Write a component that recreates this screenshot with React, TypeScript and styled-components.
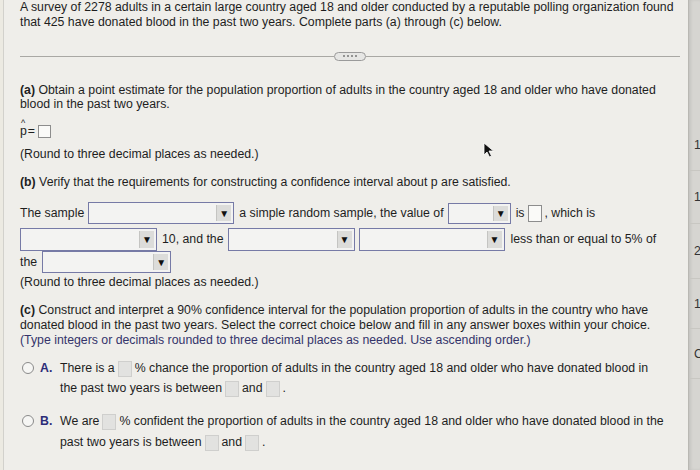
import React from 'react';
import styled, { createGlobalStyle } from 'styled-components';

const GlobalStyle = createGlobalStyle`
  html, body {
    margin: 0;
    padding: 0;
    background: #edece8;
  }
  body {
    font-family: "Liberation Sans", Arial, sans-serif;
    font-size: 12.3px;
    color: #1e1e1e;
  }
`;

const Screen = styled.div`
  display: flex;
  width: 700px;
  height: 470px;
  overflow: hidden;
  background: #efeeea;
`;

const Gutter = styled.div`
  width: 3px;
  border-right: 1px solid #d2d1cc;
  background: #eceae2;
`;

const Main = styled.main`
  position: relative;
  flex: 1;
  padding: 0 0 0 16px;
`;

const Side = styled.aside`
  width: 11px;
  background: #d6d5d1;
  border-left: 1px solid #b9b8b3;
  box-shadow: inset 2px 0 3px rgba(0, 0, 0, 0.08);
  display: flex;
  flex-direction: column;
  padding-top: 120px;
`;

const SideItem = styled.div<{ $h: number }>`
  height: ${(p) => p.$h}px;
  border-bottom: 1px solid #c8c7c2;
  display: flex;
  align-items: center;
  padding-left: 5px;
  color: #333;
  overflow: hidden;
`;

const Para = styled.p<{ $top: number; $lh?: number }>`
  margin: ${(p) => p.$top}px 0 0;
  line-height: ${(p) => p.$lh ?? 15}px;
  white-space: nowrap;
`;

const DividerRow = styled.div`
  margin-top: 21px;
  height: 10px;
  width: 660px;
  display: flex;
  align-items: center;
`;

const Rule = styled.div`
  flex: 1;
  height: 1px;
  background: #a9a8a4;
`;

const Pill = styled.div`
  width: 30px;
  height: 7px;
  border: 1px solid #9a9a9a;
  border-radius: 5px;
  background: #e6e6e4;
  display: flex;
  align-items: center;
  justify-content: center;
  gap: 2px;
  span {
    width: 2px;
    height: 2px;
    background: #777;
    border-radius: 1px;
  }
`;

const Bold = styled.b`
  font-weight: bold;
`;

const Row = styled.div<{ $top: number; $h: number }>`
  display: flex;
  align-items: center;
  margin-top: ${(p) => p.$top}px;
  height: ${(p) => p.$h}px;
  white-space: nowrap;
`;

const Gap = styled.span<{ $w: number }>`
  display: inline-block;
  width: ${(p) => p.$w}px;
`;

const Select = styled.div<{ $w: number; $h?: number }>`
  width: ${(p) => p.$w}px;
  height: ${(p) => p.$h ?? 22}px;
  box-sizing: border-box;
  border: 1px solid #767aa6;
  background: #f3f3f2;
  display: flex;
  justify-content: flex-end;
  align-items: stretch;
`;

const Arrow = styled.div`
  width: 14px;
  margin: 2px 2px 2px 0;
  background: #dcdcda;
  border-left: 1px solid #c4c4c2;
  display: flex;
  align-items: center;
  justify-content: center;
  font-size: 10px;
  color: #111;
`;

const Box = styled.span<{ $w?: number; $h?: number; $fill?: boolean }>`
  display: inline-block;
  vertical-align: middle;
  box-sizing: border-box;
  width: ${(p) => p.$w ?? 14}px;
  height: ${(p) => p.$h ?? 16}px;
  border: 1px solid ${(p) => (p.$fill ? '#cfcfcd' : '#8d8d8d')};
  background: ${(p) => (p.$fill ? '#e2e2e0' : '#fafaf8')};
  margin: 0 3px;
`;

const Hat = styled.span`
  position: relative;
  display: inline-block;
  &::before {
    content: '^';
    position: absolute;
    left: 1px;
    top: -6px;
    font-size: 9px;
  }
`;

const Note = styled.span`
  color: #34346a;
`;

const Choice = styled.div<{ $top: number; $lh: number }>`
  display: flex;
  margin-top: ${(p) => p.$top}px;
  line-height: ${(p) => p.$lh}px;
  white-space: nowrap;
`;

const Radio = styled.span`
  width: 12px;
  height: 12px;
  box-sizing: border-box;
  border: 1.5px solid #8a8a8a;
  border-radius: 50%;
  background: #f6f6f4;
  margin: 4px 6px 0 2px;
  flex-shrink: 0;
`;

const Letter = styled.span`
  width: 20px;
  font-weight: bold;
  color: #2c2c78;
  flex-shrink: 0;
`;

const Cursor = styled.svg`
  position: absolute;
  left: 479px;
  top: 142px;
`;

const App: React.FC = (): JSX.Element => {
  return (
    <>
      <GlobalStyle />
      <Screen>
        <Gutter />
        <Main>
          <Para $top={0}>
            A survey of 2278 adults in a certain large country aged 18 and older conducted by a reputable polling organization found
            <br />
            that 425 have donated blood in the past two years. Complete parts (a) through (c) below.
          </Para>
          <DividerRow>
            <Rule />
            <Pill>
              <span />
              <span />
              <span />
              <span />
            </Pill>
            <Rule />
          </DividerRow>
          <Para $top={22} $lh={14}>
            <Bold>(a)</Bold> Obtain a point estimate for the population proportion of adults in the country aged 18 and older who have donated
            <br />
            blood in the past two years.
          </Para>
          <Row $top={12} $h={16}>
            <Hat>p</Hat>
            <Gap $w={1} />=
            <Box $w={13} $h={13} />
          </Row>
          <Para $top={8}>(Round to three decimal places as needed.)</Para>
          <Para $top={13}>
            <Bold>(b)</Bold> Verify that the requirements for constructing a confidence interval about p are satisfied.
          </Para>
          <Row $top={11} $h={24}>
            The sample
            <Gap $w={4} />
            <Select $w={146}>
              <Arrow>▼</Arrow>
            </Select>
            <Gap $w={5} />
            a simple random sample, the value of
            <Gap $w={4} />
            <Select $w={63} $h={21}>
              <Arrow>▼</Arrow>
            </Select>
            <Gap $w={5} />
            is
            <Box $w={14} $h={17} />
            , which is
          </Row>
          <Row $top={2} $h={24}>
            <Select $w={137} $h={23}>
              <Arrow>▼</Arrow>
            </Select>
            <Gap $w={5} />
            10, and the
            <Gap $w={4} />
            <Select $w={127} $h={23}>
              <Arrow>▼</Arrow>
            </Select>
            <Gap $w={4} />
            <Select $w={146} $h={23}>
              <Arrow>▼</Arrow>
            </Select>
            <Gap $w={6} />
            less than or equal to 5% of
          </Row>
          <Row $top={0} $h={22}>
            the
            <Gap $w={5} />
            <Select $w={129}>
              <Arrow>▼</Arrow>
            </Select>
          </Row>
          <Para $top={2}>(Round to three decimal places as needed.)</Para>
          <Para $top={13}>
            <Bold>(c)</Bold> Construct and interpret a 90% confidence interval for the population proportion of adults in the country who have
            <br />
            donated blood in the past two years. Select the correct choice below and fill in any answer boxes within your choice.
            <br />
            <Note>(Type integers or decimals rounded to three decimal places as needed. Use ascending order.)</Note>
          </Para>
          <Choice $top={10} $lh={20}>
            <Radio />
            <Letter>A.</Letter>
            <div>
              There is a<Box $fill />% chance the proportion of adults in the country aged 18 and older who have donated blood in
              <br />
              the past two years is between
              <Box $fill />
              and
              <Box $fill />.
            </div>
          </Choice>
          <Choice $top={13} $lh={21}>
            <Radio />
            <Letter>B.</Letter>
            <div>
              We are<Box $fill />% confident the proportion of adults in the country aged 18 and older who have donated blood in the
              <br />
              past two years is between
              <Box $fill />
              and
              <Box $fill />.
            </div>
          </Choice>
          <Cursor width="12" height="16" viewBox="0 0 12 16">
            <path d="M1 1 L1 13 L4 10 L6.5 15 L8.5 14 L6 9 L10.5 9 Z" fill="#111" stroke="#fff" strokeWidth="0.8" />
          </Cursor>
        </Main>
        <Side>
          <SideItem $h={50}>1</SideItem>
          <SideItem $h={52}>1</SideItem>
          <SideItem $h={54}>2</SideItem>
          <SideItem $h={49}>1</SideItem>
          <SideItem $h={49}>C</SideItem>
        </Side>
      </Screen>
    </>
  );
};

export default App;
